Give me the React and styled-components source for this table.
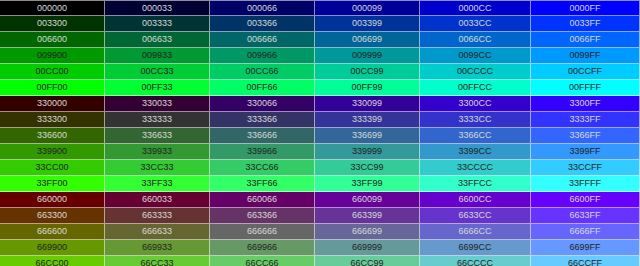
import styled, { createGlobalStyle } from "styled-components"

const Global = createGlobalStyle`
  html, body {
    margin: 0;
    padding: 0;
    overflow: hidden;
    background: #fff;
  }
`;

const STEPS = ["00", "33", "66", "99", "CC", "FF"];
// only the rows that fit in the window (the last one is half visible)
const VISIBLE_ROWS = 17;

const Grid = styled.div`
  display: grid;
  grid-template-columns: 105px 105px 105px 105px 111px 109px;
  width: 640px;
  font-family: "Liberation Sans Narrow", "Liberation Sans", Arial, sans-serif;
  font-size: 9px;
`;

const Cell = styled.div`
  box-sizing: border-box;
  height: 16px;
  display: flex;
  align-items: center;
  justify-content: center;
  background-color: ${(props) => props.bg};
  color: ${(props) => (props.dark ? "#222" : "#d8d8d8")};
  border-right: 1px solid rgba(255, 255, 255, 0.55);
  border-bottom: 1px solid rgba(255, 255, 255, 0.55);
  border-top: ${(props) => (props.first ? "1px solid rgba(255, 255, 255, 0.55)" : "none")};
  line-height: 1;
`;

function App() {
  const rows = [];
  STEPS.forEach((r) => {
    STEPS.forEach((g) => {
      rows.push({ r, g });
    });
  });

  return (
    <>
      <Global />
      <Grid>
        {rows.slice(0, VISIBLE_ROWS).map(({ r, g }, i) =>
          STEPS.map((b) => {
            const hex = r + g + b;
            return (
              <Cell key={hex} bg={"#" + hex} dark={parseInt(g, 16) >= 0x99} first={i === 0}>
                {hex}
              </Cell>
            );
          })
        )}
      </Grid>
    </>
  );
}

export default App
